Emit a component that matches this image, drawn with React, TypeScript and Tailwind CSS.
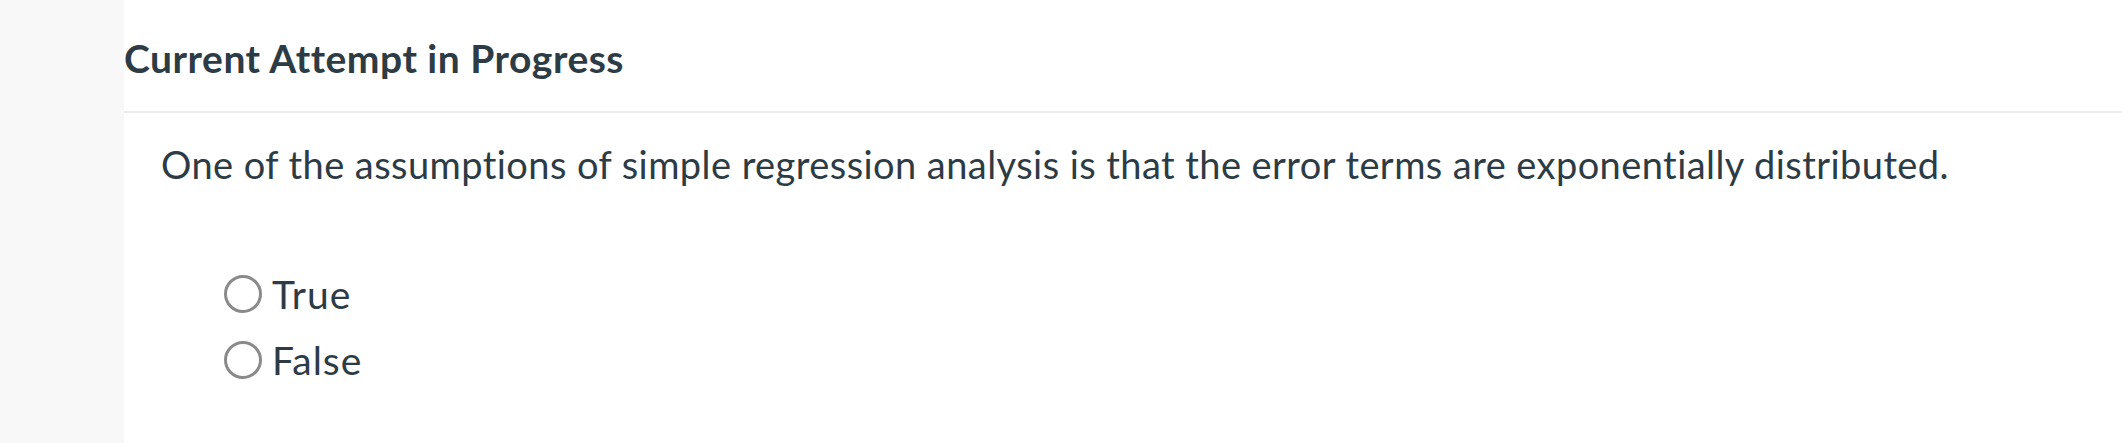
export default function App() {
  return (
    <div
      className="flex h-[443px] w-[2122px] overflow-hidden bg-white text-[#2d3b45] [font-variant-ligatures:none]"
      style={{ fontFamily: "Lato, 'Open Sans', sans-serif" }}
    >
      <div className="w-[124px] shrink-0 bg-[#f8f8f8]" />
      <div className="flex-1">
        <div className="border-b-2 border-[#ececec] pb-[31px] pt-[36px]">
          <h1 className="text-[39px] font-bold leading-[44px] tracking-[0.5px]">Current Attempt in Progress</h1>
        </div>
        <div className="pl-[37px] pt-[29px]">
          <p className="text-[38px] leading-[44px] tracking-[0.43px]">
            One of the assumptions of simple regression analysis is that the error terms are exponentially distributed.
          </p>
          <div className="mt-[75px] flex flex-col pl-[63px]">
            {["True", "False"].map((o) => (
              <label key={o} className="flex h-[66px] items-center gap-[10px] text-[39px] tracking-[1px]">
                <span className="h-[38px] w-[38px] rounded-full border-[3px] border-[#8a8a8a] bg-white" />
                <span>{o}</span>
              </label>
            ))}
          </div>
        </div>
      </div>
    </div>
  );
}
